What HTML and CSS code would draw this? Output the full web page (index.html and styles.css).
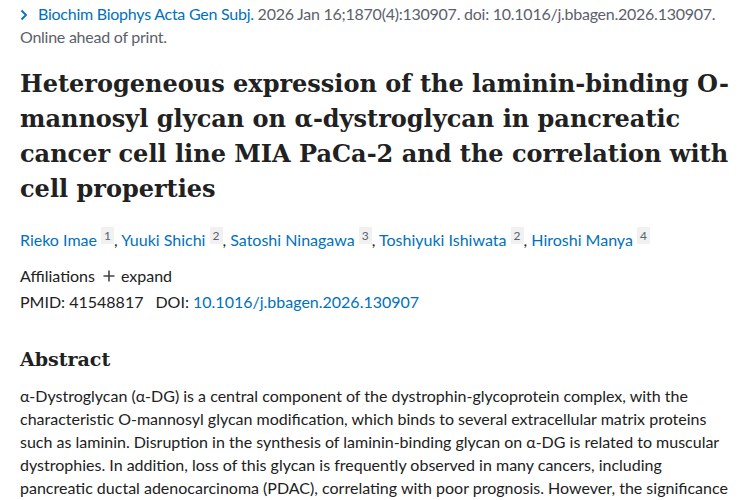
FILE: index.html
```html
<!DOCTYPE html>
<html lang="en">
<head>
<meta charset="utf-8">
<title>Article</title>
<link rel="stylesheet" href="styles.css">
</head>
<body>
<main class="article">
  <div class="cit">
    <a class="journal" href="#"><svg class="chev" viewBox="0 0 8 12" width="8" height="12"><path d="M1.5 1.5 L6 6 L1.5 10.5" fill="none" stroke="currentColor" stroke-width="1.8"/></svg>Biochim Biophys Acta Gen Subj.</a>
    <span class="meta">2026 Jan 16;1870(4):130907. doi: 10.1016/j.bbagen.2026.130907.</span>
    <div class="meta">Online ahead of print.</div>
  </div>
  <h1 class="title">Heterogeneous expression of the laminin-binding O-mannosyl glycan on α-dystroglycan in pancreatic cancer cell line MIA PaCa-2 and the correlation with cell properties</h1>
  <div class="authors">
    <a href="#">Rieko Imae</a> <sup class="aff">1</sup>, <a href="#">Yuuki Shichi</a> <sup class="aff">2</sup>, <a href="#">Satoshi Ninagawa</a> <sup class="aff">3</sup>, <a href="#">Toshiyuki Ishiwata</a> <sup class="aff">2</sup>, <a href="#">Hiroshi Manya</a> <sup class="aff">4</sup>
  </div>
  <div class="affil">
    <span>Affiliations</span>
    <button class="expand"><svg viewBox="0 0 12 12" width="12" height="12"><path d="M6 0.5 V11.5 M0.5 6 H11.5" stroke="currentColor" stroke-width="1.6"/></svg>expand</button>
  </div>
  <div class="ids">
    <span class="id">PMID: 41548817</span>
    <span class="id">DOI: <a href="#">10.1016/j.bbagen.2026.130907</a></span>
  </div>
  <section class="abstract">
    <h2>Abstract</h2>
    <p>α-Dystroglycan (α-DG) is a central component of the dystrophin-glycoprotein complex, with the characteristic O-mannosyl glycan modification, which binds to several extracellular matrix proteins such as laminin. Disruption in the synthesis of laminin-binding glycan on α-DG is related to muscular dystrophies. In addition, loss of this glycan is frequently observed in many cancers, including pancreatic ductal adenocarcinoma (PDAC), correlating with poor prognosis. However, the significance of this glycan in cancer cells remains unclear.</p>
  </section>
</main>
</body>
</html>
```
FILE: styles.css
```css
html, body {
  margin: 0;
  padding: 0;
  background: #fff;
}
body {
  font-family: Lato, "Open Sans", sans-serif;
  font-size: 16px;
  line-height: 23px;
  color: #212121;
}
a {
  color: #0071bc;
  text-decoration: none;
}
.article {
  width: 712px;
  padding: 2px 0 0 20px;
}
.cit {
  letter-spacing: -0.25px;
}
.cit .chev {
  margin-right: 10px;
  vertical-align: -1px;
}
.meta {
  color: #5b616b;
}
.title {
  font-family: "DejaVu Serif", serif;
  font-weight: bold;
  font-size: 24px;
  line-height: 35px;
  color: #212121;
  margin: 18px 0 0;
}
.authors {
  margin-top: 22px;
}
.aff {
  font-size: 12px;
  line-height: 1;
  color: #5b616b;
  background: #f1f1f1;
  padding: 1px 3px;
  vertical-align: 6px;
}
.affil {
  margin-top: 13px;
  display: flex;
  align-items: center;
  gap: 8px;
}
.expand {
  border: 0;
  background: none;
  font: inherit;
  color: #212121;
  padding: 0;
  display: flex;
  align-items: center;
  gap: 6px;
}
.expand svg {
  color: #444;
}
.ids {
  margin-top: 3px;
  display: flex;
  gap: 12px;
}
.abstract h2 {
  font-family: "DejaVu Serif", serif;
  font-weight: bold;
  font-size: 19px;
  line-height: 30px;
  margin: 31px 0 0;
}
.abstract p {
  margin: 10px 0 0;
}
```
